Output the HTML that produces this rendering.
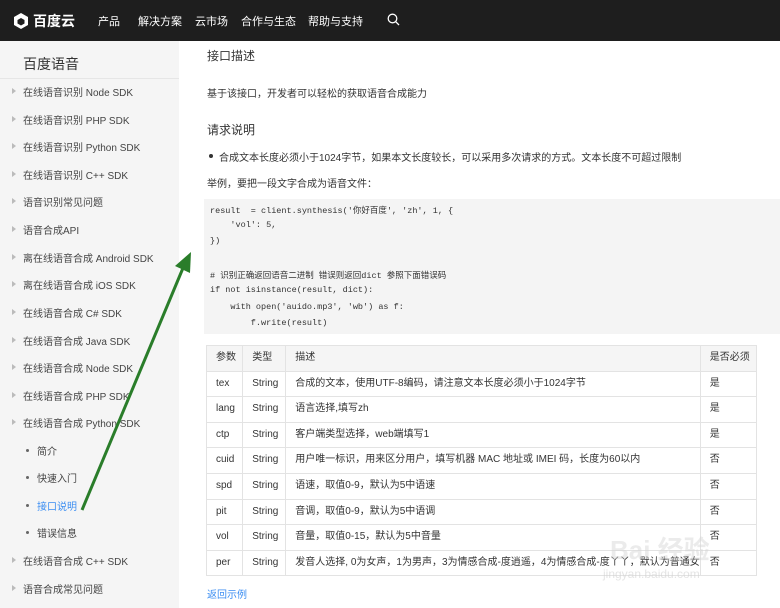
<!DOCTYPE html>
<html><head><meta charset="utf-8"><style>
*{margin:0;padding:0;box-sizing:border-box}
body{width:780px;height:608px;overflow:hidden;font-family:"Liberation Sans","Noto Sans CJK SC",sans-serif;font-size:10px;color:#333;background:#fff;position:relative}
.hd{position:absolute;left:0;top:0;width:780px;height:41px;background:#1e1e1e;color:#fff}
.hd span{position:absolute;top:13px;font-size:11px}
.sb{position:absolute;left:0;top:41px;width:179px;height:567px;background:#f5f5f5}
.sb .t{position:absolute;left:23px;top:13px;font-size:14px;color:#333}
.sb .ln{position:absolute;left:0;top:37px;width:179px;border-top:1px solid #e6e6e6}
.it{position:absolute;left:23px;font-size:10px;color:#444;white-space:nowrap}
.it:before{content:"";position:absolute;left:-11px;top:4px;border-left:4px solid #bbb;border-top:3px solid transparent;border-bottom:3px solid transparent}
.sub{position:absolute;left:37px;font-size:10px;color:#444}
.sub:before{content:"";position:absolute;left:-11px;top:6px;width:3px;height:3px;border-radius:50%;background:#666}
.c{position:absolute;left:207px;white-space:nowrap}
.code{position:absolute;left:204px;top:199px;width:576px;height:135px;background:#f4f4f4;font-family:"Liberation Mono","Noto Sans CJK SC",monospace;font-size:8.5px;color:#333}
.code div{position:absolute;left:6px;white-space:pre}
table{position:absolute;left:206px;top:345px;width:551px;border-collapse:collapse;font-size:10px}
td{border:1px solid #e3e3e3;height:25.6px;padding:0 0 0 9px;color:#333;white-space:nowrap;vertical-align:middle;line-height:14px}
td span{display:inline-block;line-height:14px;vertical-align:middle}
tr:first-child td{background:#f5f5f5}
</style></head><body>
<div class="hd">
<svg style="position:absolute;left:12px;top:12px" width="18" height="18" viewBox="0 0 18 18"><path d="M9 1L16 5V13L9 17L2 13V5Z" fill="#fff"/><path d="M9 6L12.5 8V11.5L9 13.5L5.5 11.5V8Z" fill="#1e1e1e"/></svg>
<span style="left:33px;top:11px;font-size:14px;font-weight:bold">百度云</span>
<span style="left:98px">产品</span><span style="left:138px">解决方案</span><span style="left:195px">云市场</span><span style="left:241px">合作与生态</span><span style="left:308px">帮助与支持</span>
<svg style="position:absolute;left:387px;top:13px" width="13" height="13" viewBox="0 0 13 13"><circle cx="5.5" cy="5.5" r="4.3" stroke="#fff" stroke-width="1.3" fill="none"/><path d="M8.6 8.6L12 12" stroke="#fff" stroke-width="1.3"/></svg>
</div>
<div class="sb"><div class="t">百度语音</div><div class="ln"></div></div>
<div class="it" style="top:84px">在线语音识别 Node SDK</div>
<div class="it" style="top:112px">在线语音识别 PHP SDK</div>
<div class="it" style="top:139px">在线语音识别 Python SDK</div>
<div class="it" style="top:167px">在线语音识别 C++ SDK</div>
<div class="it" style="top:194px">语音识别常见问题</div>
<div class="it" style="top:222px">语音合成API</div>
<div class="it" style="top:250px">离在线语音合成 Android SDK</div>
<div class="it" style="top:277px">离在线语音合成 iOS SDK</div>
<div class="it" style="top:305px">在线语音合成 C# SDK</div>
<div class="it" style="top:333px">在线语音合成 Java SDK</div>
<div class="it" style="top:360px">在线语音合成 Node SDK</div>
<div class="it" style="top:388px">在线语音合成 PHP SDK</div>
<div class="it" style="top:415px;">在线语音合成 Python SDK</div>
<div class="sub" style="top:443px">简介</div>
<div class="sub" style="top:470px">快速入门</div>
<div class="sub" style="top:498px;color:#3c8ef2">接口说明</div>
<div class="sub" style="top:525px">错误信息</div>
<div class="it" style="top:553px">在线语音合成 C++ SDK</div>
<div class="it" style="top:581px">语音合成常见问题</div>

<div class="c" style="top:47px;font-size:12px">接口描述</div>
<div class="c" style="top:85px">基于该接口，开发者可以轻松的获取语音合成能力</div>
<div class="c" style="top:121px;font-size:12px">请求说明</div>
<div class="c" style="top:149px;left:219px">合成文本长度必须小于1024字节，如果本文长度较长，可以采用多次请求的方式。文本长度不可超过限制</div>
<div style="position:absolute;left:209px;top:154px;width:4px;height:4px;border-radius:50%;background:#333"></div>
<div class="c" style="top:175px">举例，要把一段文字合成为语音文件：</div>
<div class="code">
<div style="top:5px">result  = client.synthesis('你好百度', 'zh', 1, {</div>
<div style="top:21px">    'vol': 5,</div>
<div style="top:37px">})</div>
<div style="top:70px"># 识别正确返回语音二进制 错误则返回dict 参照下面错误码</div>
<div style="top:86px">if not isinstance(result, dict):</div>
<div style="top:103px">    with open('auido.mp3', 'wb') as f:</div>
<div style="top:119px">        f.write(result)</div>
</div>
<table>
<tr><td style="width:38px"><span>参数</span></td><td style="width:45px"><span>类型</span></td><td><span>描述</span></td><td style="width:58px"><span>是否必须</span></td></tr>
<tr><td><span>tex</span></td><td><span>String</span></td><td><span>合成的文本，使用UTF-8编码，请注意文本长度必须小于1024字节</span></td><td><span>是</span></td></tr>
<tr><td><span>lang</span></td><td><span>String</span></td><td><span>语言选择,填写zh</span></td><td><span>是</span></td></tr>
<tr><td><span>ctp</span></td><td><span>String</span></td><td><span>客户端类型选择，web端填写1</span></td><td><span>是</span></td></tr>
<tr><td><span>cuid</span></td><td><span>String</span></td><td><span>用户唯一标识，用来区分用户，填写机器 MAC 地址或 IMEI 码，长度为60以内</span></td><td><span>否</span></td></tr>
<tr><td><span>spd</span></td><td><span>String</span></td><td><span>语速，取值0-9，默认为5中语速</span></td><td><span>否</span></td></tr>
<tr><td><span>pit</span></td><td><span>String</span></td><td><span>音调，取值0-9，默认为5中语调</span></td><td><span>否</span></td></tr>
<tr><td><span>vol</span></td><td><span>String</span></td><td><span>音量，取值0-15，默认为5中音量</span></td><td><span>否</span></td></tr>
<tr><td><span>per</span></td><td><span>String</span></td><td><span>发音人选择, 0为女声，1为男声，3为情感合成-度逍遥，4为情感合成-度丫丫，默认为普通女</span></td><td><span>否</span></td></tr>
</table>
<div class="c" style="top:586px;color:#3c8ef2">返回示例</div>
<div style="position:absolute;left:610px;top:530px;font-size:26px;color:rgba(210,210,210,.45);font-weight:bold">Bai 经验</div>
<div style="position:absolute;left:603px;top:567px;font-size:12px;color:rgba(210,210,210,.6)">jingyan.baidu.com</div>
<svg style="position:absolute;left:0;top:0" width="780" height="608"><path d="M82 510L183 268" stroke="#2a7d2a" stroke-width="3"/><path d="M191 252L175 266L190 273Z" fill="#2a7d2a"/></svg>
</body></html>
